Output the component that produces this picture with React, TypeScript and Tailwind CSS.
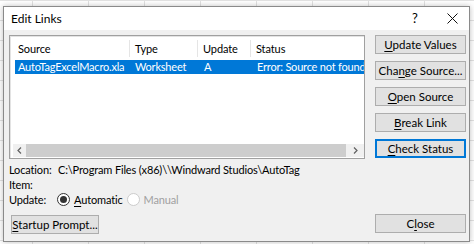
import type { ReactNode } from "react";

const font = "font-['Lato','Segoe_UI',sans-serif]";

function Key({ children }: { children: ReactNode }) {
  return <span className="underline underline-offset-2">{children}</span>;
}

function DialogButton({
  children,
  focused = false,
  className = ""
}: {
  children: ReactNode;
  focused?: boolean;
  className?: string;
}) {
  const border = focused
    ? "border-[#0078d7] shadow-[inset_0_0_0_1px_#0078d7]"
    : "border-[#adadad]";

  return (
    <button
      className={`flex h-[19px] items-center justify-center border bg-[#e1e1e1] text-[11.5px] leading-none text-black ${border} ${className}`}
    >
      <span className="whitespace-nowrap">{children}</span>
    </button>
  );
}

function Radio({ checked, disabled }: { checked?: boolean; disabled?: boolean }) {
  return (
    <span
      className={`flex h-[13px] w-[13px] items-center justify-center rounded-full border bg-white ${
        disabled ? "border-[#cccccc]" : "border-[#333333]"
      }`}
    >
      {checked && <span className="h-[7px] w-[7px] rounded-full bg-[#333333]" />}
    </span>
  );
}

const columns = [
  { label: "Source", width: "w-[117px]" },
  { label: "Type", width: "w-[68px]" },
  { label: "Update", width: "w-[53px]" },
  { label: "Status", width: "flex-1" }
];

const row = ["AutoTagExcelMacro.xla", "Worksheet", "A", "Error: Source not found"];

export default function App() {
  return (
    <div
      className={`h-[244px] w-[474px] overflow-hidden bg-white bg-[linear-gradient(to_right,#e2e2e2_1px,transparent_1px),linear-gradient(to_bottom,#e2e2e2_1px,transparent_1px)] bg-[length:56px_20px] bg-[position:32px_0] pl-[3px] pt-[6px] ${font}`}
    >
      <div className="flex h-[236px] w-[467px] flex-col border border-[#8a8a8a] bg-[#f0f0f0] shadow-[0_0_6px_rgba(0,0,0,0.25)]">
        <div className="flex h-[23px] shrink-0 items-center bg-white pl-[7px] text-[12px] text-black">
          <span className="flex-1">Edit Links</span>
          <span className="w-[40px] text-center text-[13px]">?</span>
          <span className="flex w-[34px] justify-center">
            <svg width="11" height="11" viewBox="0 0 11 11">
              <path d="M0.5 0.5 L10.5 10.5 M10.5 0.5 L0.5 10.5" stroke="#111" strokeWidth="1" />
            </svg>
          </span>
        </div>

        <div className="flex flex-1 pl-[5px] pt-[5px]">
          <div className="flex w-[356px] flex-col">
            <div className="flex h-[124px] flex-col border border-[#a0a0a0] bg-white pl-[3px] pt-[4px] shadow-[inset_1px_1px_0_#e3e3e3]">
              <div className="flex h-[17px] text-[11px] leading-[17px] tracking-[-0.1px] text-black">
                {columns.map((column, index) => (
                  <div
                    key={column.label}
                    className={`${column.width} pl-[5px] ${
                      index < columns.length - 1 ? "border-r border-[#e5e5e5]" : ""
                    }`}
                  >
                    {column.label}
                  </div>
                ))}
              </div>
              <div className="mt-[3px] ml-[2px] flex h-[14px] overflow-hidden bg-[#0078d7] text-[11px] leading-[14px] tracking-[-0.2px] text-white">
                <div className="w-[115px] overflow-hidden whitespace-nowrap pl-[3px]">{row[0]}</div>
                <div className="w-[68px] pl-[5px]">{row[1]}</div>
                <div className="w-[53px] pl-[6px]">{row[2]}</div>
                <div className="flex-1 overflow-hidden whitespace-nowrap pl-[6px]">{row[3]}</div>
              </div>
              <div className="flex-1" />
              <div className="mb-[1px] flex h-[13px] items-center bg-[#f0f0f0] text-[#606060]">
                <span className="flex w-[13px] justify-center">
                  <svg width="5" height="7" viewBox="0 0 5 7">
                    <path d="M4 0.5 L1 3.5 L4 6.5" stroke="#606060" strokeWidth="1.2" fill="none" />
                  </svg>
                </span>
                <span className="h-[13px] w-[320px] bg-[#cdcdcd]" />
                <span className="flex flex-1 justify-center">
                  <svg width="5" height="7" viewBox="0 0 5 7">
                    <path d="M1 0.5 L4 3.5 L1 6.5" stroke="#606060" strokeWidth="1.2" fill="none" />
                  </svg>
                </span>
              </div>
            </div>

            <div className="mt-[3px] flex flex-col text-[11px] leading-[15px] tracking-[-0.15px] text-black">
              <div className="flex">
                <span className="w-[49px]">Location:</span>
                <span>C:\Program Files (x86)\\Windward Studios\AutoTag</span>
              </div>
              <div>Item:</div>
              <div className="flex items-center">
                <span className="w-[48px]">Update:</span>
                <span className="flex items-center gap-[4px]">
                  <Radio checked />
                  <span>
                    <Key>A</Key>utomatic
                  </span>
                </span>
                <span className="ml-[4px] flex items-center gap-[4px] text-[#a0a0a0]">
                  <Radio disabled />
                  <span>Manual</span>
                </span>
              </div>
            </div>

            <DialogButton className="ml-[2px] mt-[8px] w-[88px]">
              <Key>S</Key>tartup Prompt...
            </DialogButton>
          </div>

          <div className="ml-[10px] flex w-[91px] flex-col">
            <div className="flex flex-col gap-[7px]">
              <DialogButton>
                <Key>U</Key>pdate Values
              </DialogButton>
              <DialogButton>
                Cha<Key>n</Key>ge Source...
              </DialogButton>
              <DialogButton>
                <Key>O</Key>pen Source
              </DialogButton>
              <DialogButton>
                <Key>B</Key>reak Link
              </DialogButton>
              <DialogButton focused>
                <Key>C</Key>heck Status
              </DialogButton>
            </div>
            <DialogButton className="mt-[56px]">
              C<Key>l</Key>ose
            </DialogButton>
          </div>
        </div>
      </div>
    </div>
  );
}
